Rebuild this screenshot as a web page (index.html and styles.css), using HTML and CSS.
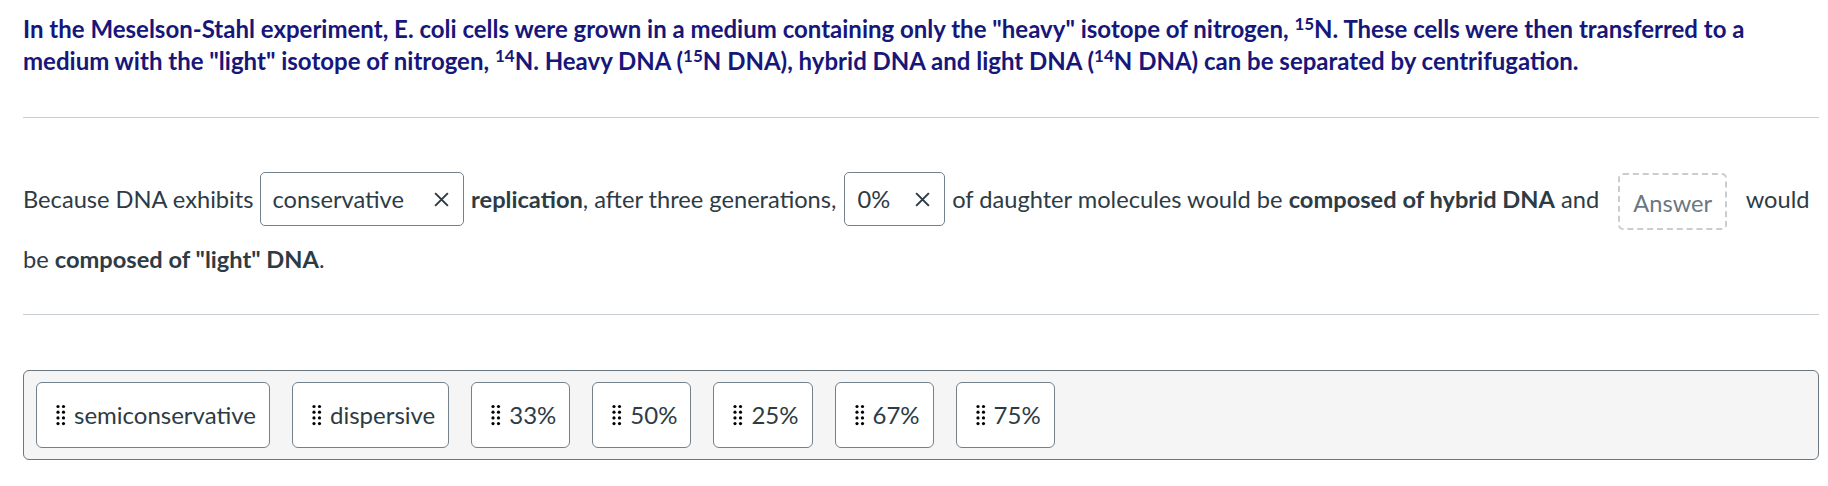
FILE: index.html
```html
<!DOCTYPE html>
<html>
<head>
<meta charset="utf-8">
<link rel="stylesheet" href="styles.css">
</head>
<body>
<div class="page">
  <p class="stem">In the Meselson-Stahl experiment, E. coli cells were grown in a medium containing only the "heavy" isotope of nitrogen, <sup>15</sup>N. These cells were then transferred to a<br>medium with the "light" isotope of nitrogen, <sup>14</sup>N. Heavy DNA (<sup>15</sup>N DNA), hybrid DNA and light DNA (<sup>14</sup>N DNA) can be separated by centrifugation.</p>
  <hr class="rule rule-top">
  <p class="sentence">Because DNA exhibits <span class="blank filled"><span class="blank-text">conservative</span><svg class="x" viewBox="0 0 16 16"><path d="M2 2 L14 14 M14 2 L2 14"/></svg></span> <b>replication</b>, after three generations, <span class="blank filled short"><span class="blank-text">0%</span><svg class="x" viewBox="0 0 16 16"><path d="M2 2 L14 14 M14 2 L2 14"/></svg></span> of daughter molecules would be <b>composed of hybrid DNA</b> and <span class="blank empty">Answer</span> would be <b>composed of "light" DNA</b>.</p>
  <hr class="rule rule-bottom">
  <div class="bank">
    <div class="chip"><svg class="grip" viewBox="0 0 10 22"><circle cx="2" cy="2.5" r="1.6"/><circle cx="7.5" cy="2.5" r="1.6"/><circle cx="2" cy="8.2" r="1.6"/><circle cx="7.5" cy="8.2" r="1.6"/><circle cx="2" cy="13.9" r="1.6"/><circle cx="7.5" cy="13.9" r="1.6"/><circle cx="2" cy="19.6" r="1.6"/><circle cx="7.5" cy="19.6" r="1.6"/></svg><span>semiconservative</span></div>
    <div class="chip"><svg class="grip" viewBox="0 0 10 22"><circle cx="2" cy="2.5" r="1.6"/><circle cx="7.5" cy="2.5" r="1.6"/><circle cx="2" cy="8.2" r="1.6"/><circle cx="7.5" cy="8.2" r="1.6"/><circle cx="2" cy="13.9" r="1.6"/><circle cx="7.5" cy="13.9" r="1.6"/><circle cx="2" cy="19.6" r="1.6"/><circle cx="7.5" cy="19.6" r="1.6"/></svg><span>dispersive</span></div>
    <div class="chip"><svg class="grip" viewBox="0 0 10 22"><circle cx="2" cy="2.5" r="1.6"/><circle cx="7.5" cy="2.5" r="1.6"/><circle cx="2" cy="8.2" r="1.6"/><circle cx="7.5" cy="8.2" r="1.6"/><circle cx="2" cy="13.9" r="1.6"/><circle cx="7.5" cy="13.9" r="1.6"/><circle cx="2" cy="19.6" r="1.6"/><circle cx="7.5" cy="19.6" r="1.6"/></svg><span>33%</span></div>
    <div class="chip"><svg class="grip" viewBox="0 0 10 22"><circle cx="2" cy="2.5" r="1.6"/><circle cx="7.5" cy="2.5" r="1.6"/><circle cx="2" cy="8.2" r="1.6"/><circle cx="7.5" cy="8.2" r="1.6"/><circle cx="2" cy="13.9" r="1.6"/><circle cx="7.5" cy="13.9" r="1.6"/><circle cx="2" cy="19.6" r="1.6"/><circle cx="7.5" cy="19.6" r="1.6"/></svg><span>50%</span></div>
    <div class="chip"><svg class="grip" viewBox="0 0 10 22"><circle cx="2" cy="2.5" r="1.6"/><circle cx="7.5" cy="2.5" r="1.6"/><circle cx="2" cy="8.2" r="1.6"/><circle cx="7.5" cy="8.2" r="1.6"/><circle cx="2" cy="13.9" r="1.6"/><circle cx="7.5" cy="13.9" r="1.6"/><circle cx="2" cy="19.6" r="1.6"/><circle cx="7.5" cy="19.6" r="1.6"/></svg><span>25%</span></div>
    <div class="chip"><svg class="grip" viewBox="0 0 10 22"><circle cx="2" cy="2.5" r="1.6"/><circle cx="7.5" cy="2.5" r="1.6"/><circle cx="2" cy="8.2" r="1.6"/><circle cx="7.5" cy="8.2" r="1.6"/><circle cx="2" cy="13.9" r="1.6"/><circle cx="7.5" cy="13.9" r="1.6"/><circle cx="2" cy="19.6" r="1.6"/><circle cx="7.5" cy="19.6" r="1.6"/></svg><span>67%</span></div>
    <div class="chip"><svg class="grip" viewBox="0 0 10 22"><circle cx="2" cy="2.5" r="1.6"/><circle cx="7.5" cy="2.5" r="1.6"/><circle cx="2" cy="8.2" r="1.6"/><circle cx="7.5" cy="8.2" r="1.6"/><circle cx="2" cy="13.9" r="1.6"/><circle cx="7.5" cy="13.9" r="1.6"/><circle cx="2" cy="19.6" r="1.6"/><circle cx="7.5" cy="19.6" r="1.6"/></svg><span>75%</span></div>
  </div>
</div>
</body>
</html>
```

FILE: styles.css
```css
html, body {
  margin: 0;
  padding: 0;
  background: #ffffff;
}

.page {
  width: 1796px;
  padding: 13px 0 0 23px;
  font-family: Lato, "Open Sans", "Liberation Sans", sans-serif;
  color: #2d3b45;
}

.stem {
  margin: 0;
  font-size: 24px;
  line-height: 32px;
  font-weight: 700;
  color: #17177a;
}

.stem sup {
  font-size: 17px;
  line-height: 0;
  vertical-align: 8px;
}

.rule {
  border: 0;
  height: 1px;
  background: #c7cdd1;
  margin: 0;
}

.rule-top {
  margin-top: 40px;
}

.sentence {
  margin: 53px 0 0 0;
  font-size: 23.65px;
  line-height: 56px;
}

.sentence b {
  font-weight: 700;
}

.blank {
  display: inline-flex;
  align-items: center;
  box-sizing: border-box;
  vertical-align: middle;
  line-height: 28px;
}

.filled {
  height: 54px;
  border: 1px solid #73818c;
  border-radius: 5px;
  padding: 0 13px 0 12px;
  gap: 29px;
  margin-right: 1px;
  position: relative;
  top: -3px;
}

.filled.short {
  gap: 24px;
  margin-left: 2px;
}

.x {
  width: 17px;
  height: 17px;
  fill: none;
  stroke: #2d3b45;
  stroke-width: 1.9;
}

.empty {
  height: 57px;
  border: 2px dashed #c7cdd1;
  border-radius: 5px;
  padding: 4px 13px 0 13px;
  color: #6b7780;
  margin: 0 13px;
  position: relative;
  top: -1px;
}

.rule-bottom {
  margin-top: 27px;
}

.bank {
  margin-top: 55px;
  display: flex;
  gap: 22px;
  box-sizing: border-box;
  height: 90px;
  padding: 11px 12px;
  background: #f5f5f5;
  border: 1px solid #6b7780;
  border-radius: 6px;
}

.chip {
  display: flex;
  align-items: center;
  gap: 8px;
  box-sizing: border-box;
  height: 66px;
  padding: 0 13px 0 19px;
  background: #ffffff;
  border: 1px solid #73818c;
  border-radius: 6px;
  font-size: 24px;
  color: #2d3b45;
}

.grip {
  width: 10px;
  height: 22px;
  fill: #000000;
}
```
